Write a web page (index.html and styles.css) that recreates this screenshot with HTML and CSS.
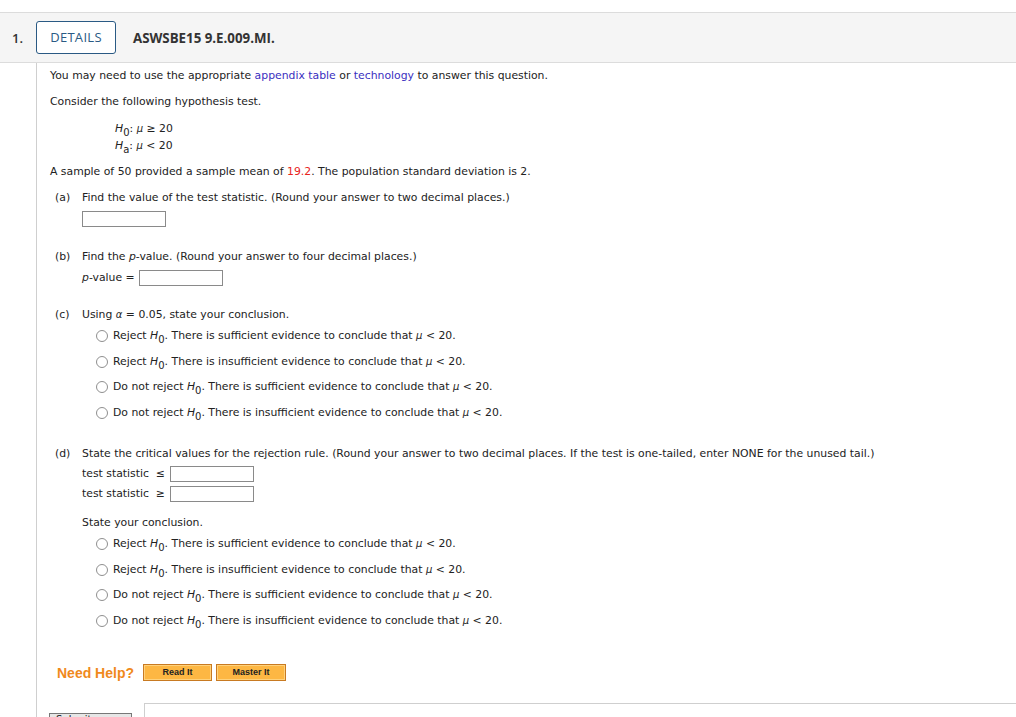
FILE: index.html
```html
<!DOCTYPE html>
<html>
<head>
<meta charset="utf-8">
<link rel="stylesheet" href="styles.css">
</head>
<body>
<div class="question">
  <div class="qhead">
    <span class="qnum">1.</span>
    <span class="details">DETAILS</span>
    <span class="qcode">ASWSBE15 9.E.009.MI.</span>
  </div>
  <div class="qbody">
    <p class="line l1">You may need to use the appropriate <span class="link">appendix table</span> or <span class="link">technology</span> to answer this question.</p>
    <p class="line l2">Consider the following hypothesis test.</p>
    <div class="hyp">
      <div><i>H</i><sub>0</sub>: <i class="mu">μ</i> ≥ 20</div>
      <div><i>H</i><sub>a</sub>: <i class="mu">μ</i> &lt; 20</div>
    </div>
    <p class="line l3">A sample of 50 provided a sample mean of <span class="red">19.2</span>. The population standard deviation is 2.</p>

    <div class="part pa">
      <div class="plabel">(a)</div>
      <div class="pcontent">
        <div>Find the value of the test statistic. (Round your answer to two decimal places.)</div>
        <div class="inrow"><span class="box"></span></div>
      </div>
    </div>

    <div class="part pb">
      <div class="plabel">(b)</div>
      <div class="pcontent">
        <div>Find the <i>p</i>-value. (Round your answer to four decimal places.)</div>
        <div class="inrow pv"><span><i>p</i>-value =</span><span class="box"></span></div>
      </div>
    </div>

    <div class="part pc">
      <div class="plabel">(c)</div>
      <div class="pcontent">
        <div>Using <i class="mu">α</i> = 0.05, state your conclusion.</div>
        <ul class="radios">
          <li><span class="radio"></span><span class="rtext">Reject <i>H</i><sub>0</sub>. There is sufficient evidence to conclude that <i class="mu">μ</i> &lt; 20.</span></li>
          <li><span class="radio"></span><span class="rtext">Reject <i>H</i><sub>0</sub>. There is insufficient evidence to conclude that <i class="mu">μ</i> &lt; 20.</span></li>
          <li><span class="radio"></span><span class="rtext">Do not reject <i>H</i><sub>0</sub>. There is sufficient evidence to conclude that <i class="mu">μ</i> &lt; 20.</span></li>
          <li><span class="radio"></span><span class="rtext">Do not reject <i>H</i><sub>0</sub>. There is insufficient evidence to conclude that <i class="mu">μ</i> &lt; 20.</span></li>
        </ul>
      </div>
    </div>

    <div class="part pd">
      <div class="plabel">(d)</div>
      <div class="pcontent">
        <div>State the critical values for the rejection rule. (Round your answer to two decimal places. If the test is one-tailed, enter NONE for the unused tail.)</div>
        <div class="crit">
          <div class="critrow"><span class="critlab">test statistic&nbsp; ≤</span><span class="box"></span></div>
          <div class="critrow"><span class="critlab">test statistic&nbsp; ≥</span><span class="box"></span></div>
        </div>
        <div class="state">State your conclusion.</div>
        <ul class="radios">
          <li><span class="radio"></span><span class="rtext">Reject <i>H</i><sub>0</sub>. There is sufficient evidence to conclude that <i class="mu">μ</i> &lt; 20.</span></li>
          <li><span class="radio"></span><span class="rtext">Reject <i>H</i><sub>0</sub>. There is insufficient evidence to conclude that <i class="mu">μ</i> &lt; 20.</span></li>
          <li><span class="radio"></span><span class="rtext">Do not reject <i>H</i><sub>0</sub>. There is sufficient evidence to conclude that <i class="mu">μ</i> &lt; 20.</span></li>
          <li><span class="radio"></span><span class="rtext">Do not reject <i>H</i><sub>0</sub>. There is insufficient evidence to conclude that <i class="mu">μ</i> &lt; 20.</span></li>
        </ul>
      </div>
    </div>

    <div class="help">
      <span class="needhelp">Need Help?</span>
      <span class="hbtn readit">Read It</span>
      <span class="hbtn masterit">Master It</span>
    </div>

    <div class="bottom">
      <div class="submit">Submit Answer</div>
      <div class="panel"></div>
    </div>
  </div>
</div>
</body>
</html>
```

FILE: styles.css
```css
html, body {
  margin: 0;
  padding: 0;
  background: #fff;
  overflow: hidden;
}
body {
  font-family: "DejaVu Sans", Verdana, sans-serif;
  font-size: 10.85px;
  color: #222;
  height: 717px;
}
.question {
  padding-top: 12px;
}
.qhead {
  display: flex;
  align-items: center;
  height: 49px;
  background: #f5f5f5;
  border-top: 1px solid #dcdcdc;
  border-bottom: 1px solid #dcdcdc;
  font-family: "Open Sans", sans-serif;
  font-size: 13px;
  color: #333;
}
.qnum {
  width: 24px;
  padding-left: 12px;
  font-weight: 600;
}
.details {
  box-sizing: border-box;
  width: 80px;
  height: 33px;
  line-height: 31px;
  text-align: center;
  border: 1px solid #2a5a84;
  border-radius: 3px;
  color: #2a5a84;
  background: #fff;
  letter-spacing: 0.3px;
}
.qcode {
  margin-left: 17px;
  font-weight: 700;
  font-size: 13.3px;
  color: #333;
}
.qbody {
  margin-left: 36px;
  border-left: 1px solid #cfcfcf;
  padding-left: 13px;
  padding-top: 5px;
  height: 700px;
}
.line {
  margin: 0;
  line-height: 16px;
}
.l2 { margin-top: 10px; }
.link { color: #3a2fc0; }
.red { color: #e8231c; }
.hyp {
  margin-top: 10px;
  margin-left: 65px;
  line-height: 17px;
}
i { font-style: italic; }
sub {
  font-size: 10px;
  vertical-align: -4px;
  line-height: 0;
}
.mu { font-size: 10px; }
.l3 { margin-top: 10px; }
.part {
  display: flex;
  line-height: 16px;
}
.plabel {
  width: 27px;
  padding-left: 5px;
  flex: none;
}
.pcontent { flex: 1; }
.pa { margin-top: 10px; }
.inrow { margin-top: 5px; height: 16px; display: flex; align-items: center; }
.box {
  display: inline-block;
  box-sizing: border-box;
  width: 84px;
  height: 16px;
  border: 1px solid #8a8a8a;
  background: #fff;
}
.pb { margin-top: 22px; }
.pv .box { margin-left: 4px; }
.pc { margin-top: 21px; }
.radios {
  list-style: none;
  margin: 0;
  padding: 0 0 0 14px;
}
.radios li {
  display: flex;
  align-items: center;
  height: 16px;
  margin-top: 9.7px;
}
.radios li:first-child { margin-top: 5px; }
.rtext { white-space: nowrap; }
.radio {
  box-sizing: border-box;
  width: 12px;
  height: 12px;
  border: 1px solid #8f8f8f;
  border-radius: 50%;
  margin-right: 5px;
  background: #fff;
  flex: none;
}
.pd { margin-top: 25px; }
.crit { margin-top: 4px; }
.critrow {
  display: flex;
  align-items: center;
  height: 16px;
  margin-bottom: 4px;
}
.critlab { width: 88px; }
.state { margin-top: 13px; }
.help {
  margin-top: 35px;
  margin-left: 7px;
  display: flex;
  align-items: center;
  font-family: "Liberation Sans", Arial, sans-serif;
}
.needhelp {
  color: #f0891c;
  font-weight: 700;
  font-size: 14px;
  margin-right: 9px;
}
.hbtn {
  box-sizing: border-box;
  height: 17px;
  line-height: 15px;
  text-align: center;
  font-size: 9px;
  font-weight: 700;
  color: #222;
  border: 1px solid #c87a22;
  background: #fdb743;
  box-shadow: inset 0 0 0 1px #ffd27c;
}
.readit { width: 69px; }
.masterit { width: 70px; margin-left: 4px; }
.bottom {
  display: flex;
  align-items: flex-start;
  margin-top: 22px;
}
.submit {
  margin-top: 10px;
  margin-left: -1px;
  width: 83px;
  height: 20px;
  box-sizing: border-box;
  border: 1px solid #777;
  background: #e6e6e6;
  font-size: 10px;
  padding-left: 6px;
  overflow: hidden;
}
.panel {
  margin-left: 12px;
  flex: 1;
  height: 40px;
  border-top: 1px solid #cfcfcf;
  border-left: 1px solid #cfcfcf;
}
```
